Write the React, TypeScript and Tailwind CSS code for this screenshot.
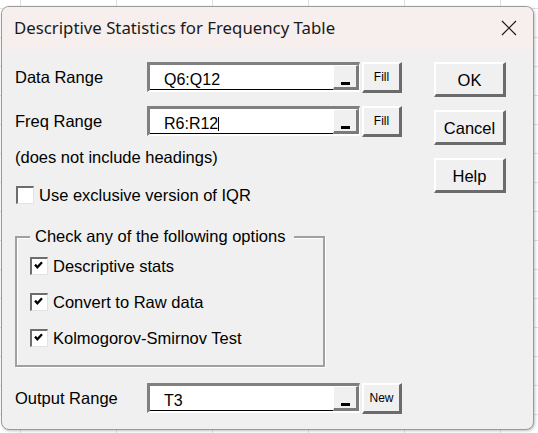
import React from "react";

function RefEdit({ value, cursor }: { value: string; cursor?: boolean }) {
  return (
    <div className="flex w-[213px] h-[30px] flex-none border-t-[3px] border-l-[3px] border-t-[#808080] border-l-[#808080] border-r border-b-2 border-r-white border-b-white">
      <div className="flex flex-1 items-start bg-white border-b border-b-black pl-[14px] pt-[5px] text-[16px] leading-[19px] text-black">
        <span>{value}</span>
        {cursor && <span className="mt-[3px] h-[14px] w-px bg-black" />}
      </div>
      <div className="flex w-[26px] items-end justify-center bg-[#f0f0f0] border-t border-l border-t-white border-l-white border-r-[3px] border-b-[3px] border-r-[#7a7a7a] border-b-[#7a7a7a] pb-[2px]">
        <div className="h-[3px] w-[9px] bg-black" />
      </div>
    </div>
  );
}

function Btn({ children, className }: { children: React.ReactNode; className: string }) {
  return (
    <div
      className={
        "flex flex-none items-center justify-center bg-[#f0f0f0] border-t-2 border-l-2 border-t-white border-l-white border-r-[3px] border-b-[3px] border-r-[#6b6b6b] border-b-[#6b6b6b] text-black " +
        className
      }
    >
      {children}
    </div>
  );
}

function Check({ checked }: { checked?: boolean }) {
  return (
    <div className="flex h-[18px] w-[18px] flex-none items-start bg-white border-t-2 border-l-2 border-t-[#6d6d6d] border-l-[#6d6d6d] border-r border-b border-r-[#e3e3e3] border-b-[#e3e3e3] pl-[2px] pt-[2px]">
      {checked && (
        <svg width="9" height="8" viewBox="0 0 9 8">
          <polyline points="1,3.6 3.4,6.2 8,1.2" fill="none" stroke="#000" strokeWidth="2.3" />
        </svg>
      )}
    </div>
  );
}

function Row({ label, value, btn, cursor }: { label: string; value: string; btn: string; cursor?: boolean }) {
  return (
    <div className="flex h-[31px] items-start">
      <div className="flex h-[30px] w-[132px] flex-none items-center text-[16.5px] leading-[19px]">{label}</div>
      <RefEdit value={value} cursor={cursor} />
      <Btn className="ml-[2px] h-[31px] w-[40px] text-[12px] leading-[14px]">{btn}</Btn>
    </div>
  );
}

export default function App() {
  return (
    <div className="h-[433px] w-[538px] overflow-hidden bg-white bg-[linear-gradient(to_right,#e0e0e0_1px,transparent_1px),linear-gradient(to_bottom,#e0e0e0_1px,transparent_1px)] bg-size-[96px_29px] bg-position-[20px_8px] pt-[6px] pl-[1px] font-['Liberation_Sans',Arial,sans-serif] text-black">
      <div className="flex h-[424px] w-[533px] flex-col overflow-hidden rounded-[8px] border border-[#9a9a9a] bg-[#f0f0f0] shadow-[1px_1px_3px_rgba(0,0,0,0.25)]">
        <div className="flex h-[42px] flex-none items-center justify-between bg-[#f7eeee] pl-[12px] pr-[16px]">
          <span className="font-['Noto_Sans',sans-serif] text-[16.8px] leading-[22px] text-[#1a1a1a]">
            Descriptive Statistics for Frequency Table
          </span>
          <svg width="16" height="16" viewBox="0 0 16 16">
            <path d="M1 1 L15 15 M15 1 L1 15" stroke="#1a1a1a" strokeWidth="1.2" fill="none" />
          </svg>
        </div>
        <div className="flex flex-1 pl-[13px] pt-[13px]">
          <div className="flex w-[387px] flex-col">
            <Row label="Data Range" value="Q6:Q12" btn="Fill" />
            <div className="mt-[13px]">
              <Row label="Freq Range" value="R6:R12" btn="Fill" cursor />
            </div>
            <div className="mt-[11px] text-[16.5px] leading-[19px]">(does not include headings)</div>
            <div className="mt-[19px] flex h-[18px] items-center pl-[1px]">
              <Check />
              <span className="ml-[5px] text-[16.5px] leading-[19px]">Use exclusive version of IQR</span>
            </div>
            <fieldset className="mt-[23px] w-[310px] border-2 border-[#a0a0a0] pl-[13px] pt-[11px] pb-[18px] shadow-[inset_1px_1px_0_#fff,1px_1px_0_#fff]">
              <legend className="bg-[#f0f0f0] pl-[5px] pr-[9px] text-[16.5px] leading-[19px]">
                Check any of the following options
              </legend>
              <div className="flex flex-col gap-[18px]">
                <div className="flex h-[18px] items-center">
                  <Check checked />
                  <span className="ml-[5px] text-[16.5px] leading-[19px]">Descriptive stats</span>
                </div>
                <div className="flex h-[18px] items-center">
                  <Check checked />
                  <span className="ml-[5px] text-[16.5px] leading-[19px]">Convert to Raw data</span>
                </div>
                <div className="flex h-[18px] items-center">
                  <Check checked />
                  <span className="ml-[5px] text-[16.5px] leading-[19px]">Kolmogorov-Smirnov Test</span>
                </div>
              </div>
            </fieldset>
            <div className="mt-[16px]">
              <Row label="Output Range" value="T3" btn="New" />
            </div>
          </div>
          <div className="ml-[32px] flex flex-col">
            <Btn className="h-[35px] w-[72px] text-[16.5px] leading-[19px] pt-[2px]">OK</Btn>
            <Btn className="mt-[13px] h-[35px] w-[72px] text-[16.5px] leading-[19px] pt-[2px]">Cancel</Btn>
            <Btn className="mt-[13px] h-[35px] w-[72px] text-[16.5px] leading-[19px] pt-[2px]">Help</Btn>
          </div>
        </div>
      </div>
    </div>
  );
}
